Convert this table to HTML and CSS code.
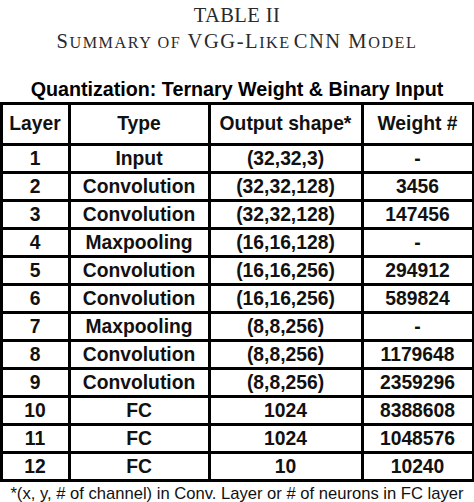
FILE: index.html
```html
<!DOCTYPE html>
<html>
<head>
<meta charset="utf-8">
<link rel="stylesheet" href="styles.css">
</head>
<body>
<div class="page">
  <div class="t1">TABLE II</div>
  <div class="t2">S<span class="sc">UMMARY OF</span> VGG-L<span class="sc">IKE</span><span class="thin"></span>CNN M<span class="sc">ODEL</span></div>
  <div class="t3">Quantization: Ternary Weight &amp; Binary Input</div>
  <table class="grid">
    <colgroup>
      <col class="c1"><col class="c2"><col class="c3"><col class="c4">
    </colgroup>
    <tr class="head"><td>Layer</td><td>Type</td><td>Output shape*</td><td>Weight #</td></tr>
    <tr><td>1</td><td>Input</td><td>(32,32,3)</td><td>-</td></tr>
    <tr><td>2</td><td>Convolution</td><td>(32,32,128)</td><td>3456</td></tr>
    <tr><td>3</td><td>Convolution</td><td>(32,32,128)</td><td>147456</td></tr>
    <tr><td>4</td><td>Maxpooling</td><td>(16,16,128)</td><td>-</td></tr>
    <tr><td>5</td><td>Convolution</td><td>(16,16,256)</td><td>294912</td></tr>
    <tr><td>6</td><td>Convolution</td><td>(16,16,256)</td><td>589824</td></tr>
    <tr><td>7</td><td>Maxpooling</td><td>(8,8,256)</td><td>-</td></tr>
    <tr><td>8</td><td>Convolution</td><td>(8,8,256)</td><td>1179648</td></tr>
    <tr><td>9</td><td>Convolution</td><td>(8,8,256)</td><td>2359296</td></tr>
    <tr><td>10</td><td>FC</td><td>1024</td><td>8388608</td></tr>
    <tr><td>11</td><td>FC</td><td>1024</td><td>1048576</td></tr>
    <tr><td>12</td><td>FC</td><td>10</td><td>10240</td></tr>
  </table>
  <div class="note">*(x, y, # of channel) in Conv. Layer or # of neurons in FC layer</div>
</div>
</body>
</html>
```

FILE: styles.css
```css
html, body {
  margin: 0;
  padding: 0;
  background: #ffffff;
}
.page {
  width: 474px;
  display: flex;
  flex-direction: column;
  align-items: center;
}
.t1 {
  margin-top: 1px;
  height: 28px;
  line-height: 28px;
  font-family: "Liberation Serif", "Times New Roman", serif;
  font-size: 20.5px;
  color: #2a2a2a;
  letter-spacing: 0.4px;
}
.t2 {
  height: 26px;
  line-height: 25px;
  font-family: "Liberation Serif", "Times New Roman", serif;
  font-size: 20.5px;
  color: #2a2a2a;
  letter-spacing: 1.55px;
  white-space: nowrap;
}
.t2 .sc {
  font-size: 16.2px;
}
.t2 .thin {
  display: inline-block;
  width: 3px;
}
.t3 {
  margin-top: 22px;
  height: 24px;
  line-height: 24px;
  font-family: "Liberation Sans", Arial, sans-serif;
  font-weight: bold;
  font-size: 19.7px;
  color: #000;
}
.grid {
  margin-top: 1px;
  width: 472px;
  border-collapse: collapse;
  table-layout: fixed;
  font-family: "Liberation Sans", Arial, sans-serif;
  font-weight: bold;
  font-size: 19.3px;
  color: #111;
}
.c1 { width: 68px; }
.c2 { width: 140px; }
.c3 { width: 153px; }
.c4 { width: 111px; }
.grid td {
  border: 3px solid #000;
  text-align: center;
  padding: 0;
  height: 25px;
  line-height: 25px;
}
.grid .head td {
  height: 38px;
  line-height: 38px;
}
.note {
  margin-top: 1px;
  height: 22px;
  line-height: 22px;
  font-family: "Liberation Sans", Arial, sans-serif;
  font-size: 16.6px;
  color: #111;
  white-space: nowrap;
}
```
